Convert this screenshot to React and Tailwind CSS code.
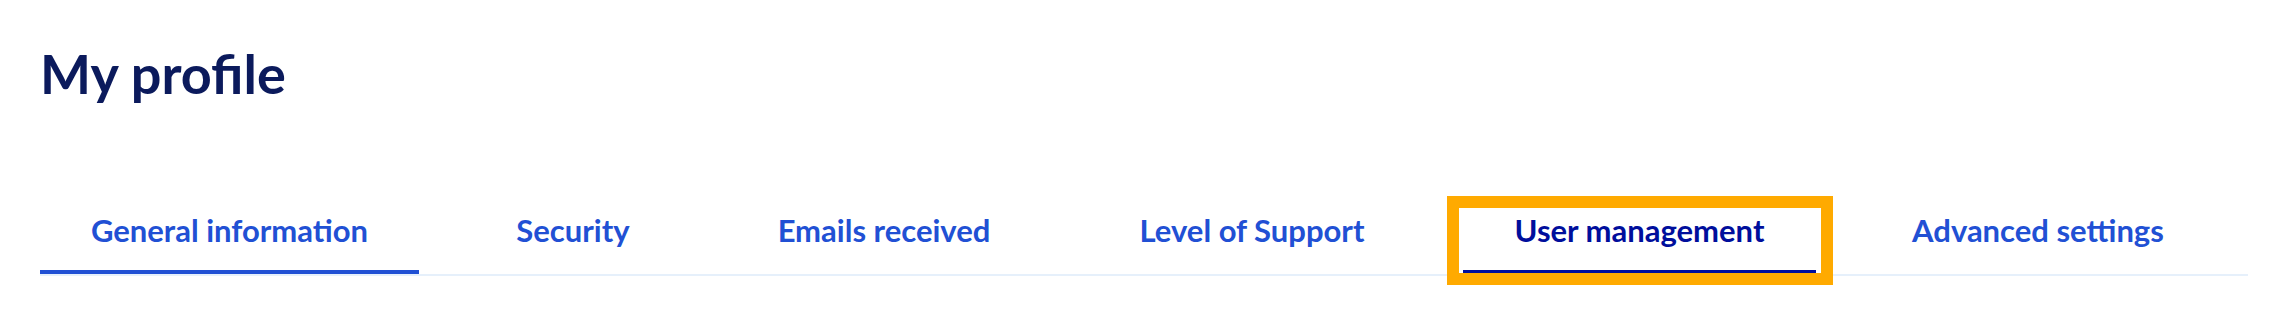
const TABS = [
  { label: "General information", width: "w-[379px]", state: "active" },
  { label: "Security", width: "w-[212px]" },
  { label: "Emails received", width: "w-[314px]" },
  { label: "Level of Support", width: "w-[326px]" },
  { label: "User management", width: "w-[353px]", state: "highlight" },
  { label: "Advanced settings", width: "w-[348px]" },
];

function Tab({ label, width, state }) {
  const color =
    state === "active"
      ? "text-[#2150d4] border-[#2150d4]"
      : state === "highlight"
      ? "text-[#000e9c] border-[#000e9c]"
      : "text-[#2150d4] border-transparent";

  return (
    <div className={`relative shrink-0 ${width} border-b-4 pb-[20px] text-center leading-[40px] ${color}`}>
      {label}
      {/* annotation box round the tab */}
      {state === "highlight" && (
        <span className="pointer-events-none absolute -top-[14px] -bottom-[15px] -left-[16px] -right-[17px] border-[12px] border-[#ffaa00]" />
      )}
    </div>
  );
}

export default function App() {
  return (
    <div className="min-h-[328px] bg-white pl-[40px] pr-[24px] font-['Lato',sans-serif]">
      <h1 className="pt-[47px] text-[54px] font-bold leading-none text-[#0b1a5c]">My profile</h1>

      <div className="mt-[109px] flex gap-[48px] border-b-2 border-[#e6f0fb] text-[31px] font-bold">
        {TABS.map((t) => (
          <Tab key={t.label} {...t} />
        ))}
      </div>
    </div>
  );
}
